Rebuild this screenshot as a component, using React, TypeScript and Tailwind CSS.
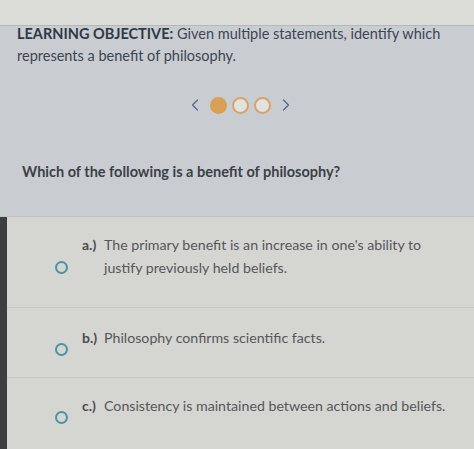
import { ChevronLeft, ChevronRight } from 'lucide-react';

const options = [
  {
    key: 'a.)',
    text: "The primary benefit is an increase in one's ability to justify previously held beliefs.",
    row: 'h-[91px] pt-[16px] border-b border-[#c6c6c2]',
    radio: 'mt-[28px]',
  },
  {
    key: 'b.)',
    text: 'Philosophy confirms scientific facts.',
    row: 'h-[70px] pt-[18px] border-b border-[#c8c8c4]',
    radio: 'mt-[17px]',
  },
  {
    key: 'c.)',
    text: 'Consistency is maintained between actions and beliefs.',
    row: 'flex-1 pt-[16px]',
    radio: 'mt-[17px]',
  },
];

export default function App() {
  return (
    <div className="w-[474px] h-[449px] overflow-hidden bg-[#d9d9d6] font-['Lato',sans-serif] flex flex-col">
      <div className="h-[25px] bg-[#dcdcd9] shrink-0" />
      <div className="h-[192px] shrink-0 bg-[#c9cdd2] border-t border-[#b3b8bd] border-b border-b-[#bfc2c4] pl-[17px] pr-4 flex flex-col">
        <p className="-mt-[3px] text-[14.5px] leading-[22px] text-[#3c4552]">
          <b className="font-bold text-[#2f3945]">LEARNING OBJECTIVE:</b> Given multiple statements, identify which represents a benefit of philosophy.
        </p>
        <div className="flex items-center justify-center gap-[5px] mt-[28px] ml-[6px]">
          <ChevronLeft className="w-[20px] h-[20px] text-[#4f6a8c]" strokeWidth={1.5} />
          <span className="w-[17px] h-[17px] rounded-full bg-[#d99f55]" />
          <span className="w-[17px] h-[17px] rounded-full border-2 border-[#d6a46a] bg-[#e2e3df]" />
          <span className="w-[17px] h-[17px] rounded-full border-2 border-[#d6a46a] bg-[#e2e3df]" />
          <ChevronRight className="w-[20px] h-[20px] text-[#4f6a8c]" strokeWidth={1.5} />
        </div>
        <p className="mt-[46px] ml-[5px] text-[14.5px] font-bold text-[#3b4148]">Which of the following is a benefit of philosophy?</p>
      </div>
      <div className="flex-1 flex">
        <div className="w-[7px] bg-[#3c3f42] shrink-0" />
        <div className="flex-1 flex flex-col bg-[#d5d5d1]">
          {options.map((o) => (
            <div key={o.key} className={`flex items-start pl-[48px] ${o.row}`}>
              <div className={`w-[27px] flex ${o.radio}`}>
                <span className="block w-[13px] h-[13px] rounded-full border-2 border-[#4b93a4] shrink-0" />
              </div>
              <span className="text-[14px] font-bold text-[#4a4c50] w-[22px] leading-[23px]">{o.key}</span>
              <span className="text-[14.2px] text-[#55575a] leading-[23px] w-[355px]">{o.text}</span>
            </div>
          ))}
        </div>
      </div>
    </div>
  );
}
